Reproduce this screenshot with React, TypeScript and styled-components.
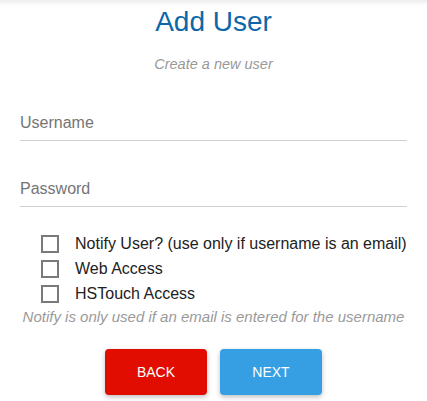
import styled, { createGlobalStyle } from "styled-components"

const GlobalStyle = createGlobalStyle`
  html, body {
    margin: 0;
    padding: 0;
    background: #fff;
  }
  body {
    font-family: "Liberation Sans", Arial, sans-serif;
  }
`

interface CheckOption {
  label: string
}

const options: CheckOption[] = [
  { label: "Notify User? (use only if username is an email)" },
  { label: "Web Access" },
  { label: "HSTouch Access" },
]

export default function App() {
  return (
    <>
      <GlobalStyle />
      <Page>
        <Title>Add User</Title>
        <Subtitle>Create a new user</Subtitle>
        <Form>
          <Field>
            <FieldInput placeholder="Username" />
          </Field>
          <Field>
            <FieldInput type="password" placeholder="Password" />
          </Field>
        </Form>
        <Checks>
          {options.map((o) => (
            <CheckRow key={o.label}>
              <Box />
              <CheckLabel>{o.label}</CheckLabel>
            </CheckRow>
          ))}
        </Checks>
        <Hint>Notify is only used if an email is entered for the username</Hint>
        <Actions>
          <ActionButton tone="#e00d00">BACK</ActionButton>
          <ActionButton tone="#369fe4">NEXT</ActionButton>
        </Actions>
      </Page>
    </>
  )
}

const Page = styled.div`
  width: 427px;
  height: 401px;
  box-sizing: border-box;
  padding: 6px 20px 0 20px;
  box-shadow: inset 0 7px 6px -6px rgba(0, 0, 0, 0.12);
  display: flex;
  flex-direction: column;
  align-items: center;
`

const Title = styled.h1`
  margin: 0;
  font-size: 28px;
  font-weight: 400;
  line-height: 32px;
  color: #0d67a8;
`

const Subtitle = styled.div`
  margin-top: 17px;
  font-size: 14.5px;
  font-style: italic;
  line-height: 18px;
  color: #999;
`

const Form = styled.div`
  align-self: stretch;
  margin-top: 28px;
  display: flex;
  flex-direction: column;
  gap: 26px;
`

const Field = styled.div`
  border-bottom: 1px solid #d0d0d5;
`

const FieldInput = styled.input`
  display: block;
  width: 100%;
  box-sizing: border-box;
  border: none;
  outline: none;
  padding: 8px 0 4px;
  font-family: "Liberation Sans", Arial, sans-serif;
  font-size: 16px;
  line-height: 27px;
  color: #333;
  background: transparent;

  &::placeholder {
    color: #757575;
  }
`

const Checks = styled.div`
  align-self: stretch;
  margin-top: 24px;
  padding-left: 21px;
  display: flex;
  flex-direction: column;
`

const CheckRow = styled.label`
  display: flex;
  align-items: center;
  height: 25px;
`

const Box = styled.span`
  width: 14px;
  height: 14px;
  border: 2px solid #7a7a7a;
  flex-shrink: 0;
`

const CheckLabel = styled.span`
  margin-left: 16px;
  font-size: 16px;
  color: #222;
`

const Hint = styled.div`
  margin-top: 2px;
  font-size: 15px;
  font-style: italic;
  color: #9a9a9a;
  white-space: nowrap;
`

const Actions = styled.div`
  margin-top: 24px;
  display: flex;
  gap: 13px;
`

const ActionButton = styled.button<{ tone: string }>`
  width: 102px;
  height: 46px;
  border: none;
  border-radius: 4px;
  background: ${({ tone }) => tone};
  color: #fff;
  font-family: "Liberation Sans", Arial, sans-serif;
  font-size: 14px;
  box-shadow: 0 2px 5px rgba(0, 0, 0, 0.25);
  cursor: pointer;
`
